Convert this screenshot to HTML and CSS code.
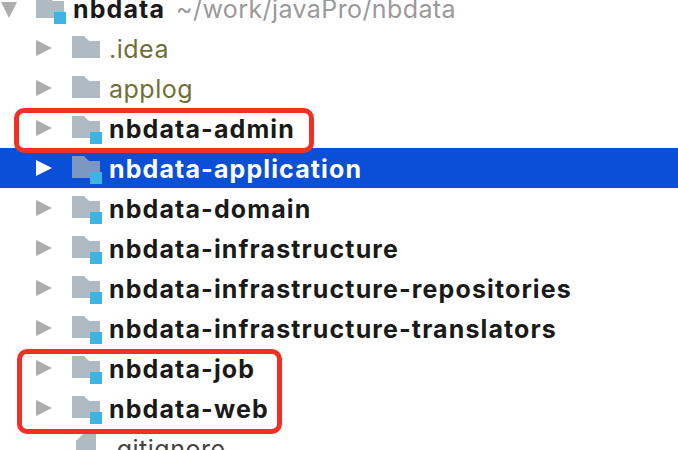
FILE: index.html
```html
<!DOCTYPE html>
<html lang="en">
<head>
    <meta charset="UTF-8">
    <title>nbdata project tree</title>
    <link rel="stylesheet" href="styles.css">
</head>
<body>
    <svg class="defs" width="0" height="0">
        <symbol id="arrow" viewBox="0 0 16 16"><path d="M0 0L16 8L0 16Z"/></symbol>
        <symbol id="folder" viewBox="0 0 28 22"><path d="M0 0H12L17 5H28V22H0Z"/></symbol>
    </svg>
    <div class="tree">
        <div class="row root">
            <svg class="arrow down"><use href="#arrow"/></svg>
            <span class="icon"><svg class="folder"><use href="#folder"/></svg><i class="badge"></i></span>
            <span class="name module">nbdata</span>
            <span class="path">~/work/javaPro/nbdata</span>
        </div>
        <div class="row">
            <svg class="arrow"><use href="#arrow"/></svg>
            <span class="icon"><svg class="folder"><use href="#folder"/></svg></span>
            <span class="name excluded">.idea</span>
        </div>
        <div class="row">
            <svg class="arrow"><use href="#arrow"/></svg>
            <span class="icon"><svg class="folder"><use href="#folder"/></svg></span>
            <span class="name excluded">applog</span>
        </div>
        <div class="row">
            <svg class="arrow"><use href="#arrow"/></svg>
            <span class="icon"><svg class="folder"><use href="#folder"/></svg><i class="badge"></i></span>
            <span class="name module">nbdata-admin</span>
        </div>
        <div class="row selected">
            <svg class="arrow"><use href="#arrow"/></svg>
            <span class="icon"><svg class="folder"><use href="#folder"/></svg><i class="badge"></i></span>
            <span class="name module">nbdata-application</span>
        </div>
        <div class="row">
            <svg class="arrow"><use href="#arrow"/></svg>
            <span class="icon"><svg class="folder"><use href="#folder"/></svg><i class="badge"></i></span>
            <span class="name module">nbdata-domain</span>
        </div>
        <div class="row">
            <svg class="arrow"><use href="#arrow"/></svg>
            <span class="icon"><svg class="folder"><use href="#folder"/></svg><i class="badge"></i></span>
            <span class="name module">nbdata-infrastructure</span>
        </div>
        <div class="row">
            <svg class="arrow"><use href="#arrow"/></svg>
            <span class="icon"><svg class="folder"><use href="#folder"/></svg><i class="badge"></i></span>
            <span class="name module">nbdata-infrastructure-repositories</span>
        </div>
        <div class="row">
            <svg class="arrow"><use href="#arrow"/></svg>
            <span class="icon"><svg class="folder"><use href="#folder"/></svg><i class="badge"></i></span>
            <span class="name module">nbdata-infrastructure-translators</span>
        </div>
        <div class="row">
            <svg class="arrow"><use href="#arrow"/></svg>
            <span class="icon"><svg class="folder"><use href="#folder"/></svg><i class="badge"></i></span>
            <span class="name module">nbdata-job</span>
        </div>
        <div class="row">
            <svg class="arrow"><use href="#arrow"/></svg>
            <span class="icon"><svg class="folder"><use href="#folder"/></svg><i class="badge"></i></span>
            <span class="name module">nbdata-web</span>
        </div>
        <div class="row file">
            <svg class="file-icon" viewBox="0 0 20 24"><path d="M8 0H20V24H0V8Z"/></svg>
            <span class="name">.gitignore</span>
        </div>
    </div>
    <div class="mark mark-admin"></div>
    <div class="mark mark-bottom"></div>
</body>
</html>
```

FILE: styles.css
```css
html, body {
    margin: 0;
    height: 100%;
    overflow: hidden;
    background: #fff;
}
body {
    position: relative;
    font-family: Inter, "Liberation Sans", sans-serif;
}
.defs {
    position: absolute;
}
.tree {
    margin-top: -12px;
}
.row {
    display: flex;
    align-items: center;
    height: 40px;
    padding-left: 36px;
    font-size: 25px;
    letter-spacing: 0.5px;
    white-space: nowrap;
}
.root {
    padding-left: 1px;
}
.arrow {
    width: 16px;
    height: 16px;
    margin-right: 20px;
    fill: #adadad;
}
.down {
    transform: rotate(90deg);
    margin-top: 4px;
    margin-right: 19px;
}
.icon {
    position: relative;
    width: 28px;
    height: 22px;
    margin-right: 9px;
    margin-top: -2px;
}
.folder {
    display: block;
    width: 28px;
    height: 22px;
    fill: #afbac2;
}
.badge {
    position: absolute;
    left: 18px;
    top: 16px;
    width: 12px;
    height: 12px;
    background: #3fb4e2;
}
.name {
    padding-top: 2px;
    color: #444;
}
.module {
    font-weight: 700;
    letter-spacing: 1.12px;
    color: #1a1a1a;
}
.excluded {
    color: #6f7038;
}
.path {
    padding-top: 2px;
    margin-left: 11px;
    letter-spacing: 0.4px;
    color: #9a9a9a;
}
.selected {
    background: #0a4fd8;
}
.selected .arrow {
    fill: #fff;
}
.selected .folder {
    fill: #7e97c2;
}
.selected .module {
    color: #fff;
}
.file {
    padding-left: 76px;
}
.file-icon {
    width: 20px;
    height: 24px;
    margin-top: -6px;
    margin-right: 13px;
    fill: #afbac2;
}
.mark {
    position: absolute;
    border: 5px solid #ee3124;
    border-radius: 10px;
    box-sizing: border-box;
}
.mark-admin {
    left: 14px;
    top: 108px;
    width: 300px;
    height: 45px;
}
.mark-bottom {
    left: 17px;
    top: 349px;
    width: 265px;
    height: 85px;
}
```
